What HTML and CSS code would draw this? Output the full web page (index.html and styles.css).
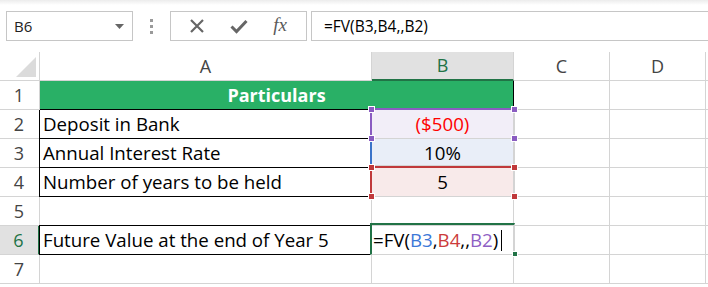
FILE: index.html
```html
<!DOCTYPE html>
<html lang="en">
<head>
    <meta charset="UTF-8">
    <title>Future Value - FV</title>
    <link rel="stylesheet" href="styles.css">
</head>
<body>

<div class="toolbar">
    <div class="name-box">
        <span>B6</span>
        <svg class="caret" width="9" height="5" viewBox="0 0 9 5"><path d="M0 0h9L4.5 5z" fill="#666"/></svg>
    </div>
    <div class="grip"><i></i><i></i><i></i></div>
    <div class="fx-box">
        <svg width="16" height="16" viewBox="0 0 16 16"><path d="M2 2l12 12M14 2L2 14" stroke="#666" stroke-width="2.2" fill="none"/></svg>
        <svg width="18" height="16" viewBox="0 0 18 16"><path d="M1.5 8.5l5 5L16.5 3" stroke="#666" stroke-width="3" fill="none"/></svg>
        <span class="fx">fx</span>
    </div>
    <div class="formula-bar">=FV(B3,B4,,B2)</div>
</div>

<div class="sheet">
    <div class="corner"><span class="tri"></span></div>
    <div class="col-head">A</div>
    <div class="col-head selected">B</div>
    <div class="col-head">C</div>
    <div class="col-head">D</div>
    <div class="col-head end"></div>

    <div class="row-head">1</div>
    <div class="cell title">Particulars</div>
    <div class="cell"></div>
    <div class="cell"></div>
    <div class="cell end"></div>

    <div class="row-head">2</div>
    <div class="cell label">Deposit in Bank</div>
    <div class="cell num neg fill-purple">($500)</div>
    <div class="cell"></div>
    <div class="cell"></div>
    <div class="cell end"></div>

    <div class="row-head">3</div>
    <div class="cell label">Annual Interest Rate</div>
    <div class="cell num fill-blue">10%</div>
    <div class="cell"></div>
    <div class="cell"></div>
    <div class="cell end"></div>

    <div class="row-head">4</div>
    <div class="cell label">Number of years to be held</div>
    <div class="cell num fill-red">5</div>
    <div class="cell"></div>
    <div class="cell"></div>
    <div class="cell end"></div>

    <div class="row-head">5</div>
    <div class="cell label-gap"></div>
    <div class="cell"></div>
    <div class="cell"></div>
    <div class="cell"></div>
    <div class="cell end"></div>

    <div class="row-head selected">6</div>
    <div class="cell label boxed">Future Value at the end of Year 5</div>
    <div class="cell editing">=FV(<span class="ref-blue">B3</span>,<span class="ref-red">B4</span>,,<span class="ref-purple">B2</span>)<span class="cursor"></span></div>
    <div class="cell"></div>
    <div class="cell"></div>
    <div class="cell end"></div>

    <div class="row-head">7</div>
    <div class="cell"></div>
    <div class="cell"></div>
    <div class="cell"></div>
    <div class="cell"></div>
    <div class="cell end"></div>

    <!-- range highlights drawn over the grid -->
    <div class="range r-purple" style="top: 56px; height: 31px;"></div>
    <div class="range r-blue" style="top: 87px; height: 27px;"></div>
    <div class="range r-red" style="top: 114px; height: 31px;"></div>
    <div class="range r-active" style="top: 171px; height: 32px;"></div>

    <span class="handle h-purple" style="left: 368px; top: 54px;"></span>
    <span class="handle h-purple" style="left: 511px; top: 54px;"></span>
    <span class="handle h-purple" style="left: 368px; top: 83px;"></span>
    <span class="handle h-purple" style="left: 511px; top: 83px;"></span>
    <span class="handle h-red" style="left: 368px; top: 112px;"></span>
    <span class="handle h-red" style="left: 511px; top: 112px;"></span>
    <span class="handle h-red" style="left: 368px; top: 141px;"></span>
    <span class="handle h-red" style="left: 511px; top: 141px;"></span>
    <span class="handle h-green" style="left: 512px; top: 199px;"></span>
</div>

</body>
</html>
```

FILE: styles.css
```css
body {
    margin: 0;
    background-color: #fff;
    font-family: "Open Sans", "Liberation Sans", sans-serif;
    color: #000;
    overflow: hidden;
}
.toolbar {
    display: flex;
    align-items: center;
    height: 52px;
    padding-left: 6px;
    box-sizing: border-box;
    background: linear-gradient(#ececec, #fff 5px);
}
.name-box {
    display: flex;
    align-items: center;
    justify-content: space-between;
    width: 127px;
    height: 30px;
    box-sizing: border-box;
    border: 1px solid #c6c6c6;
    padding: 0 8px 0 7px;
    font-size: 15px;
    color: #222;
}
.grip {
    display: flex;
    flex-direction: column;
    gap: 3px;
    margin: 0 17px 0 17px;
}
.grip i {
    width: 3px;
    height: 3px;
    background-color: #9a9a9a;
}
.fx-box {
    display: flex;
    align-items: center;
    justify-content: space-between;
    width: 137px;
    height: 30px;
    box-sizing: border-box;
    border: 1px solid #c6c6c6;
    padding: 0 19px 0 18px;
}
.fx {
    font-family: "Liberation Serif", serif;
    font-style: italic;
    font-size: 19px;
    color: #5a5a5a;
    margin-top: -3px;
}
.formula-bar {
    flex: 1;
    height: 30px;
    margin-left: 4px;
    box-sizing: border-box;
    border: 1px solid #c6c6c6;
    border-right: none;
    padding-left: 12px;
    line-height: 28px;
    font-size: 15.5px;
}
.sheet {
    position: relative;
    display: grid;
    grid-template-columns: 40px 332px 142px 96px 96px 2px;
    grid-template-rows: 29px repeat(7, 29px);
}
.sheet > div {
    box-sizing: border-box;
    border-right: 1px solid #d4d4d4;
    border-bottom: 1px solid #d4d4d4;
}
.sheet > div.end {
    border-right: none;
}
.corner {
    position: relative;
}
.tri {
    position: absolute;
    right: 3px;
    bottom: 3px;
    width: 0;
    height: 0;
    border-left: 20px solid transparent;
    border-bottom: 20px solid #dbdbdb;
}
.col-head {
    text-align: center;
    font-size: 18px;
    line-height: 28px;
    color: #444;
}
.col-head.selected {
    background-color: #e1e1e1;
    color: #217346;
    border-bottom: 2px solid #217346 !important;
    line-height: 27px;
}
.row-head {
    text-align: center;
    font-size: 18px;
    line-height: 28px;
    color: #444;
    padding-right: 1px;
}
.row-head.selected {
    background-color: #e1e1e1;
    color: #217346;
    border-right: 2px solid #217346 !important;
}
.cell {
    font-size: 18.7px;
    line-height: 28px;
    white-space: nowrap;
}
.title {
    grid-column: span 2;
    background-color: #29b066;
    color: #fff;
    font-size: 18px;
    font-weight: bold;
    text-align: center;
    border-right-color: #000 !important;
    border-bottom-color: #000 !important;
}
.label {
    padding-left: 3px;
    border-bottom-color: #000 !important;
    border-right-color: #000 !important;
    border-left: 1px solid #000;
    margin-left: -1px;
}
.boxed {
    border-top: 1px solid #000;
    margin-top: -1px;
}
.num {
    text-align: center;
}
.neg {
    color: #ff0000;
}
.fill-purple {
    background-color: #f2eef8;
}
.fill-blue {
    background-color: #e9eef8;
}
.fill-red {
    background-color: #f8eaea;
}
.editing {
    padding-left: 1px;
}
.ref-blue {
    color: #3c78d8;
}
.ref-red {
    color: #cc3b3b;
}
.ref-purple {
    color: #8e5fc4;
}
.cursor {
    display: inline-block;
    width: 1px;
    height: 21px;
    margin-left: 3px;
    vertical-align: -4px;
    background-color: #000;
}
.range {
    position: absolute;
    left: 370px;
    width: 145px;
    box-sizing: border-box;
    border: 2px solid;
}
.r-purple {
    border-color: #8a5cc1;
}
.r-blue {
    border-color: #3b73c9;
    border-top: none;
    border-bottom: none;
}
.r-red {
    border-color: #c0393b;
}
.r-active {
    border-color: #217346;
}
.handle {
    position: absolute;
    box-sizing: border-box;
    border: 1px solid #fff;
}
.h-purple {
    background-color: #8a5cc1;
    width: 7px;
    height: 7px;
}
.h-red {
    background-color: #c0393b;
    width: 7px;
    height: 7px;
}
.h-green {
    background-color: #217346;
    width: 6px;
    height: 6px;
}
```
